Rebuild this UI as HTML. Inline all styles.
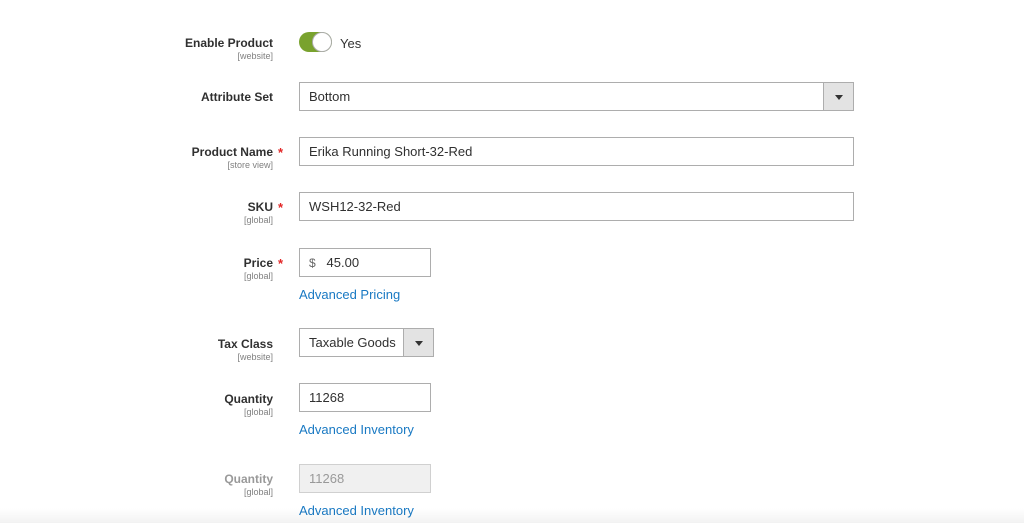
<!DOCTYPE html><html><head><style>
body{margin:0;width:1024px;height:523px;background:#fff;font-family:"Liberation Sans",sans-serif;position:relative;overflow:hidden;color:#333}
.l{position:absolute;right:751px;text-align:right;font-weight:bold;font-size:12px;color:#303030}
.l small{display:block;font-weight:normal;font-size:9px;color:#808080;margin-top:1px}
.i{position:absolute;left:299px;height:27px;border:1px solid #adadad;box-sizing:content-box;font-size:13px;line-height:27px;padding-left:9px;color:#303030;background:#fff}
.s{position:absolute;left:278px;color:#e22626;font-size:13px;font-weight:bold}
.a{position:absolute;left:299px;color:#1979c3;font-size:13px}
.btn{position:absolute;right:0;top:0;width:29px;height:27px;border-left:1px solid #adadad;background:#e3e3e3}
.btn:after{content:"";position:absolute;left:11px;top:12px;border:4px solid transparent;border-top:5px solid #333;border-bottom:0}
</style></head><body>
<div class="l" style="top:36px">Enable Product<small>[website]</small></div>
<div style="position:absolute;left:299px;top:32px;width:33px;height:20px;border-radius:10px;background:#79a22e"></div>
<div style="position:absolute;left:312px;top:32px;width:18px;height:18px;border-radius:50%;background:#fff;border:1px solid #adadad"></div>
<div style="position:absolute;left:340px;top:36px;font-size:13px">Yes</div>

<div class="l" style="top:90px">Attribute Set</div>
<div class="i" style="top:82px;width:544px">Bottom<div class="btn"></div></div>

<div class="l" style="top:145px">Product Name<small>[store view]</small></div><div class="s" style="top:145px">*</div>
<div class="i" style="top:137px;width:544px">Erika Running Short-32-Red</div>

<div class="l" style="top:200px">SKU<small>[global]</small></div><div class="s" style="top:200px">*</div>
<div class="i" style="top:192px;width:544px">WSH12-32-Red</div>

<div class="l" style="top:256px">Price<small>[global]</small></div><div class="s" style="top:256px">*</div>
<div class="i" style="top:248px;width:121px"><span style="color:#666;font-size:12px">$</span>&nbsp;&nbsp;&nbsp;45.00</div>
<div class="a" style="top:287px">Advanced Pricing</div>

<div class="l" style="top:337px">Tax Class<small>[website]</small></div>
<div class="i" style="top:328px;width:124px">Taxable Goods<div class="btn"></div></div>

<div class="l" style="top:392px">Quantity<small>[global]</small></div>
<div class="i" style="top:383px;width:121px">11268</div>
<div class="a" style="top:422px">Advanced Inventory</div>

<div class="l" style="top:472px;color:#999">Quantity<small>[global]</small></div>
<div class="i" style="top:464px;width:121px;background:#f0f0f0;border-color:#d0d0d0;color:#999">11268</div>
<div class="a" style="top:503px">Advanced Inventory</div>
<div style="position:absolute;left:0;right:0;top:508px;height:15px;background:linear-gradient(rgba(0,0,0,0),rgba(0,0,0,.05));pointer-events:none"></div>
</body></html>
